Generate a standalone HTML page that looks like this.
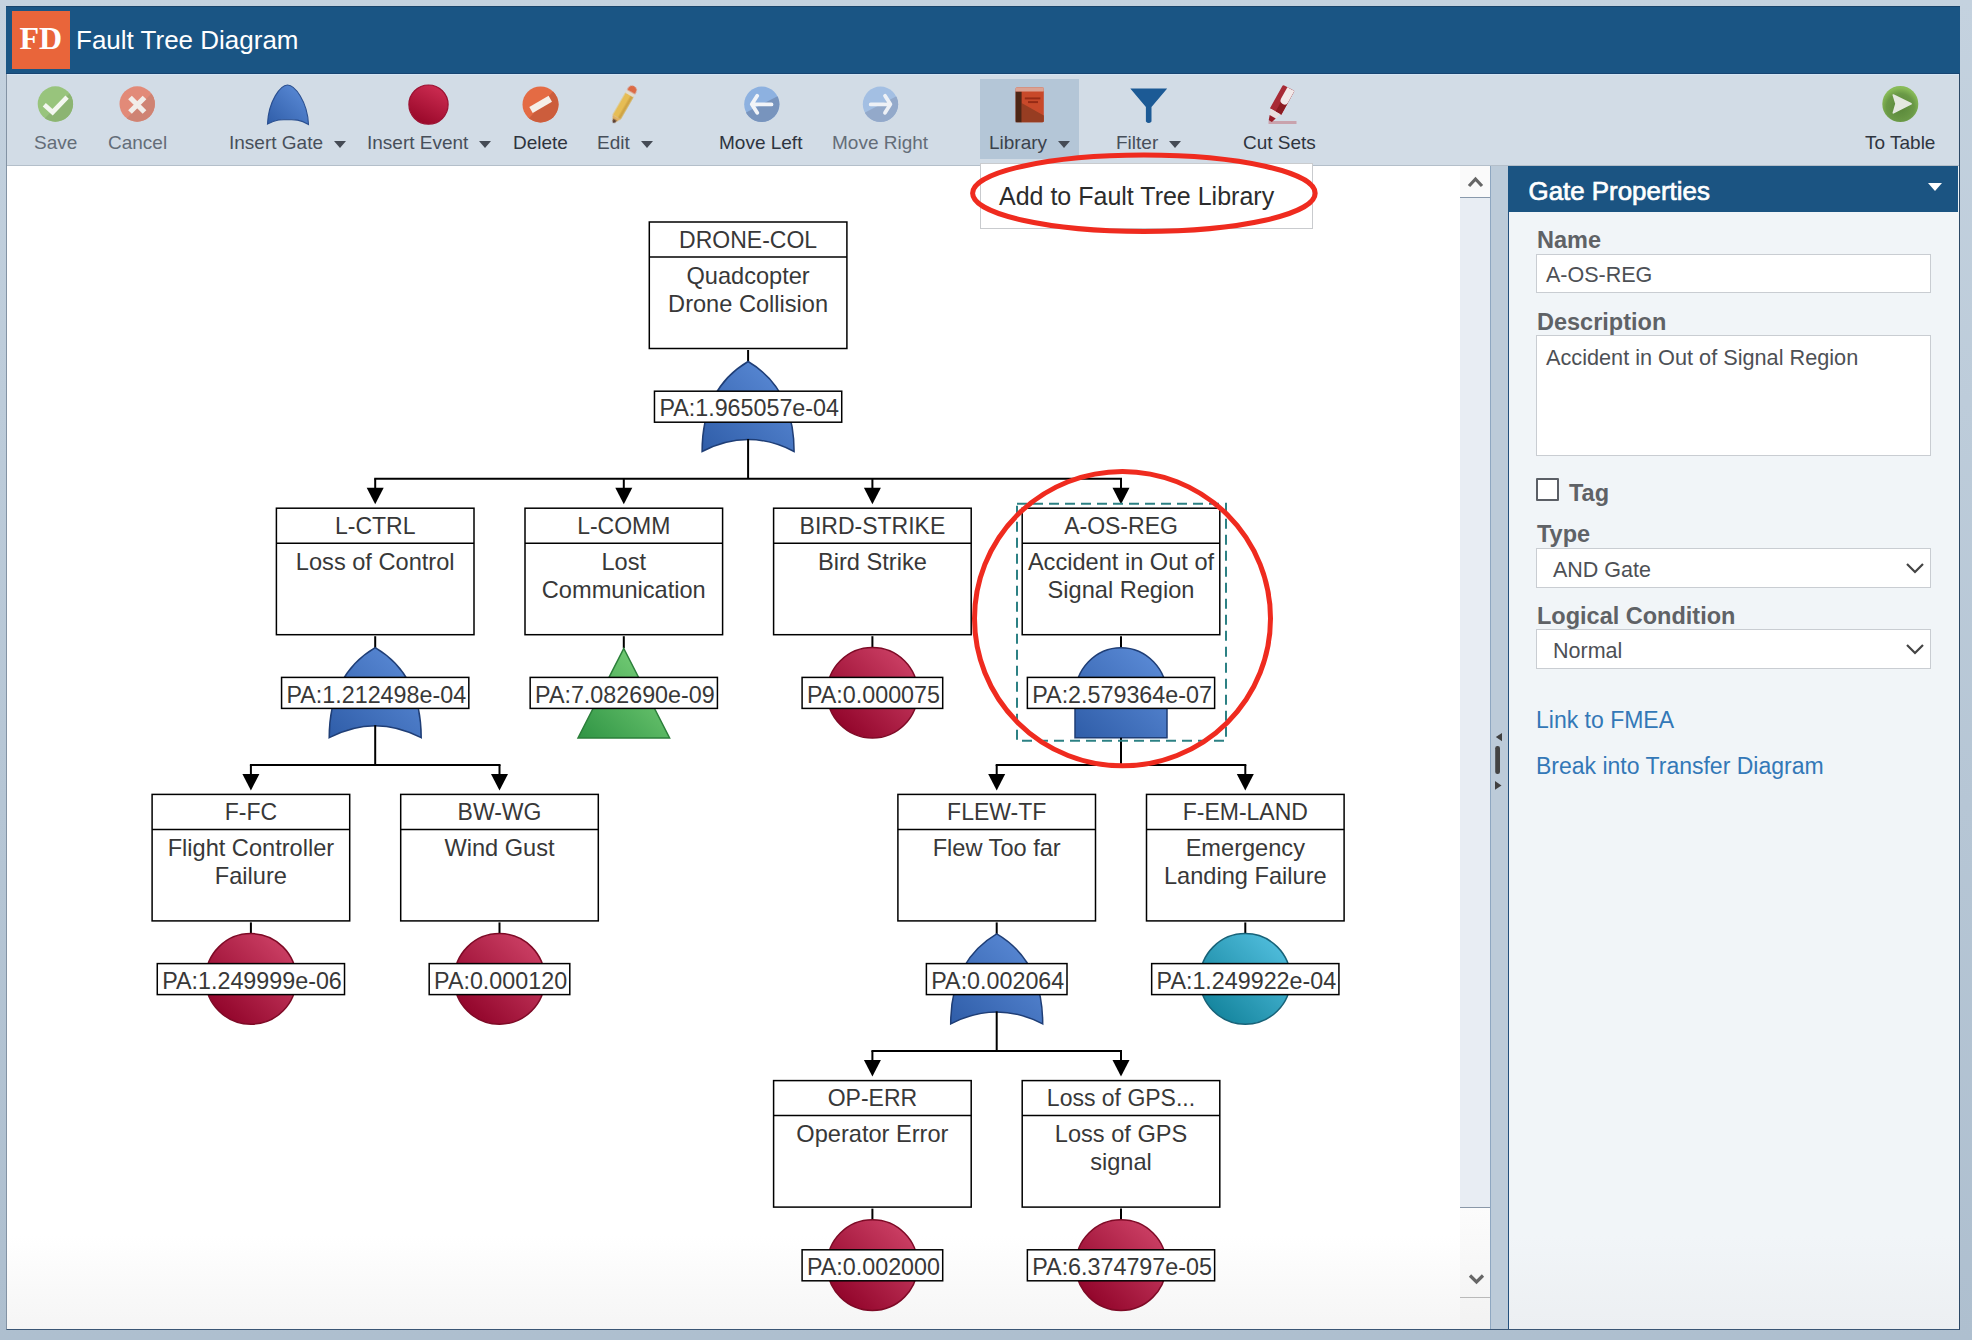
<!DOCTYPE html>
<html><head><meta charset="utf-8">
<style>
*{margin:0;padding:0;box-sizing:border-box}
html,body{width:1972px;height:1340px;overflow:hidden}
body{position:relative;background:linear-gradient(180deg,#c4d2df 0%,#b6c6d5 60%,#aebfcf 100%);font-family:"Liberation Sans",sans-serif}
.a{position:absolute}
.dt{font-family:"Liberation Sans",sans-serif;font-size:23px;fill:#383838}
.tb{position:absolute;top:132px;font-size:19px;line-height:22px;color:#2e343e;white-space:nowrap}
.dd{color:#474f5a}
.dis{color:#646d78}
.car{position:absolute;width:0;height:0;border-left:6px solid transparent;border-right:6px solid transparent;border-top:7px solid #454b55}
.lbl{position:absolute;left:1537px;font-weight:bold;font-size:23.5px;color:#5f6266;white-space:nowrap}
.inp{position:absolute;left:1536px;width:395px;background:#fff;border:1px solid #c9cdd2}
.itx{position:absolute;font-size:21.5px;color:#4d5055;white-space:nowrap}
.lnk{position:absolute;left:1536px;font-size:23px;color:#3378b7;white-space:nowrap}
</style></head>
<body>
<!-- frame borders -->
<div class="a" style="left:6px;top:6px;width:1954px;height:1324px;background:#fff;border-left:1px solid #8393a4;border-right:1px solid #2c4966;border-bottom:1px solid #3a5675"></div>

<!-- title bar -->
<div class="a" style="left:6px;top:6px;width:1954px;height:68px;background:#1a5584;border-top:1px solid #17446c;border-bottom:1px solid #174572"></div>
<div class="a" style="left:12px;top:11px;width:58px;height:58px;background:#e9653a"></div>
<div class="a" style="left:19.5px;top:20px;font-family:'Liberation Serif',serif;font-weight:bold;font-size:32px;line-height:36px;color:#fff;letter-spacing:0px">FD</div>
<div class="a" style="left:76px;top:24.5px;font-size:26px;line-height:30px;color:#fff;white-space:nowrap">Fault Tree Diagram</div>

<!-- toolbar -->
<div class="a" style="left:7px;top:74px;width:1952px;height:92px;background:#d2dce6;border-top:1px solid #d4e5f4;border-bottom:1px solid #b4bfca"></div>
<div class="a" style="left:980px;top:79px;width:99px;height:80px;background:#b4c6d7"></div>

<svg class="a" style="left:0;top:0" width="1972" height="170" viewBox="0 0 1972 170">
 <defs>
  <linearGradient id="tgred" x1="0.3" y1="0.9" x2="0.7" y2="0.1"><stop offset="0" stop-color="#9c0a2c"/><stop offset="1" stop-color="#c8294e"/></linearGradient>
  <linearGradient id="tgblue" x1="0" y1="1" x2="1" y2="0"><stop offset="0" stop-color="#2f5da8"/><stop offset="1" stop-color="#5f8fdb"/></linearGradient>
  <radialGradient id="tggreen" cx="0.5" cy="0.6" r="0.55"><stop offset="0" stop-color="#5a873a"/><stop offset="0.7" stop-color="#6a9946"/><stop offset="1" stop-color="#88bb58"/></radialGradient><filter id="blur1" x="-20%" y="-20%" width="140%" height="140%"><feGaussianBlur stdDeviation="0.7"/></filter>
  <clipPath id="cSave"><circle cx="55.4" cy="104" r="17.7"/></clipPath>
  <clipPath id="cCan"><circle cx="137.2" cy="104" r="17.7"/></clipPath>
  <clipPath id="cDel"><circle cx="540.5" cy="104.4" r="18"/></clipPath>
  <clipPath id="cML"><circle cx="761.6" cy="104.2" r="17.8"/></clipPath>
  <clipPath id="cMR"><circle cx="880.4" cy="104.2" r="17.8"/></clipPath>
 </defs>
 <!-- Save -->
 <circle cx="55.4" cy="104" r="17.7" fill="#98c47c"/>
 <path d="M44,119 L70,93 L80,103 L80,125 L55,125 Z" fill="#8cb472" clip-path="url(#cSave)"/>
 <path d="M46,106.3 L52.6,112.2 L65.5,98.8" fill="none" stroke="#f4f7f0" stroke-width="4.6" stroke-linecap="square"/>
 <!-- Cancel -->
 <circle cx="137.2" cy="104" r="17.7" fill="#e28a78"/>
 <path d="M126,119 L152,93 L162,103 L162,125 L137,125 Z" fill="#cf8373" clip-path="url(#cCan)"/>
 <path d="M130,97.5 L144.5,112 M144.5,97.5 L130,112" stroke="#f1ede9" stroke-width="5.2"/>
 <!-- Insert Gate -->
 <path d="M287.5,85 C280.5,85 268.5,101 267.5,124 C277,119 282,119.6 287.8,119.8 C294,119.6 299,119 308.5,124.5 C307.5,101 294.5,85 287.5,85 Z" fill="url(#tgblue)" stroke="#2a4f90" stroke-width="1.1"/>
 <!-- Insert Event -->
 <circle cx="428.5" cy="104.6" r="19.6" fill="url(#tgred)" stroke="#9c1232" stroke-width="1.2"/>
 <!-- Delete -->
 <circle cx="540.5" cy="104.4" r="18" fill="#e46b44"/>
 <path d="M524,124 L556,88 L566,100 L566,128 L540,128 Z" fill="#cc5d3c" clip-path="url(#cDel)"/>
 <path d="M531,110 L550.3,98.8" stroke="#f5efe9" stroke-width="6.8"/>
 <!-- Edit pencil -->
 <g transform="translate(623.3,105.4) rotate(30)" filter="url(#blur1)">
  <rect x="-4.5" y="-12.5" width="9" height="26" fill="#e6bd55"/>
  <rect x="1.5" y="-12.5" width="3" height="26" fill="#cfa445"/>
  <rect x="-4.5" y="-15.5" width="9" height="3.5" fill="#e4dccb"/>
  <path d="M-4.5,-15.5 L-4.5,-17.5 A4.5,4.5 0 0 1 4.5,-17.5 L4.5,-15.5 Z" fill="#dc6a45"/>
  <path d="M-4.5,13.5 L4.5,13.5 L1.5,19 Q0,20.5 -1.5,19 Z" fill="#e2b060"/>
  <path d="M-2.2,16.5 L2.2,16.5 L1.2,19.5 Q0,20.8 -1.2,19.5 Z" fill="#5a4038"/>
 </g>
 <!-- Move Left -->
 <g filter="url(#blur1)">
 <circle cx="761.8" cy="104.2" r="17.6" fill="#8db1e0"/>
 <path d="M778,96 L746,112.5 L746,126 L782,126 L782,96 Z" fill="#7894bd" clip-path="url(#cML)"/>
 <path d="M771.5,104.4 L753,104.4 M757.2,95.8 L751.8,104.3 L757.2,112.8" fill="none" stroke="#f2f4f8" stroke-width="3.8" stroke-linecap="round" stroke-linejoin="round"/>
 </g>
 <!-- Move Right -->
 <g filter="url(#blur1)">
 <circle cx="880.4" cy="104.2" r="17.6" fill="#a3bfe3"/>
 <path d="M897,96 L865,112.5 L865,126 L901,126 L901,96 Z" fill="#93a9ca" clip-path="url(#cMR)"/>
 <path d="M870.7,104.4 L889.2,104.4 M885,95.8 L890.4,104.3 L885,112.8" fill="none" stroke="#eef1f6" stroke-width="3.8" stroke-linecap="round" stroke-linejoin="round"/>
 </g>
 <!-- Library book -->
 <g filter="url(#blur1)">
 <rect x="1015.6" y="87.3" width="28.2" height="35" rx="1.5" fill="#c84a2a"/>
 <path d="M1021.5,103 L1043.8,115.5 L1043.8,121 Q1043.8,122.3 1042.3,122.3 L1021.5,122.3 Z" fill="#973d23"/>
 <rect x="1015.6" y="91.5" width="6" height="30.8" fill="#4d2519"/>
 <rect x="1015.6" y="87.3" width="28.2" height="4.3" rx="1.2" fill="#dba293"/>
 <rect x="1024.8" y="97.4" width="15.6" height="2" fill="#962c12"/>
 <rect x="1028" y="101.1" width="10" height="2" fill="#962c12"/>
 </g>
 <!-- Filter -->
 <path d="M1130.3,88.6 L1167.2,88.6 L1151.5,107 L1151.5,121.5 Q1148.7,124.5 1145.9,121.5 L1145.9,107 Z" fill="#1c5a95"/>
 <!-- Cut sets marker -->
 <g filter="url(#blur1)">
 <rect x="1268.5" y="121" width="28" height="3" fill="#c9a3ad"/>
 <g transform="translate(1279.5,104.5) rotate(29)">
  <path d="M-6.5,-17 Q-6.5,-19 -4.5,-19 L4.5,-19 Q6.5,-19 6.5,-17 L6.5,8 L-6.5,8 Z" fill="#a82a35"/>
  <rect x="0" y="-19" width="6.5" height="27" fill="#8c1a22"/>
  <path d="M-1.5,-19 L6.5,-19 L6.5,-6 Q6.5,-2 2.5,-2 Q-1.5,-2 -1.5,-6 Z" fill="#f1e9e9"/>
  <path d="M-5.5,8 L5.5,8 L3.5,14 L-3.5,14 Z" fill="#e9dede"/>
  <path d="M-3.5,14 L3.5,14 L1.8,19 L-1.8,19 Z" fill="#9a1c28"/>
 </g>
 </g>
 <!-- To Table -->
 <g filter="url(#blur1)"><circle cx="1900.3" cy="104" r="18" fill="url(#tggreen)"/>
 <path d="M1893.3,95 L1911.1,103.8 L1893.3,112.9 L1896,103.8 Z" fill="#e4e8e0" stroke="#e4e8e0" stroke-width="1.6" stroke-linejoin="round"/></g>
</svg>

<div class="tb dis" style="left:34px">Save</div>
<div class="tb dis" style="left:108px">Cancel</div>
<div class="tb dd" style="left:229px">Insert Gate</div><div class="car" style="left:334px;top:141px"></div>
<div class="tb dd" style="left:367px">Insert Event</div><div class="car" style="left:479px;top:141px"></div>
<div class="tb" style="left:513px">Delete</div>
<div class="tb dd" style="left:597px">Edit</div><div class="car" style="left:641px;top:141px"></div>
<div class="tb" style="left:719px">Move Left</div>
<div class="tb dis" style="left:832px">Move Right</div>
<div class="tb dd" style="left:989px;color:#3b424c">Library</div><div class="car" style="left:1058px;top:141px"></div>
<div class="tb dd" style="left:1116px">Filter</div><div class="car" style="left:1169px;top:141px"></div>
<div class="tb" style="left:1243px">Cut Sets</div>
<div class="tb" style="left:1865px">To Table</div>

<!-- canvas -->
<div class="a" style="left:7px;top:166px;width:1453px;height:1163px;background:linear-gradient(180deg,#fff 0%,#fff 92%,#f5f5f5 100%)"></div>
<svg class="a" style="left:0;top:0" width="1460" height="1329" viewBox="0 0 1460 1329">
<defs>
<linearGradient id="gblue" x1="0" y1="1" x2="1" y2="0"><stop offset="0" stop-color="#2f5da8"/><stop offset="1" stop-color="#5f8fdb"/></linearGradient>
<linearGradient id="gred" x1="0.15" y1="0.85" x2="0.85" y2="0.15"><stop offset="0" stop-color="#93062c"/><stop offset="1" stop-color="#c93d62"/></linearGradient>
<linearGradient id="gteal" x1="0.15" y1="0.85" x2="0.85" y2="0.15"><stop offset="0" stop-color="#16869f"/><stop offset="1" stop-color="#4dbad9"/></linearGradient>
<linearGradient id="ggreen" x1="0" y1="1" x2="1" y2="0"><stop offset="0" stop-color="#2f9444"/><stop offset="1" stop-color="#84d981"/></linearGradient>
</defs>
<line x1="748.10" y1="350.00" x2="748.10" y2="362.00" stroke="#000" stroke-width="2"/>
<path d="M748.10,361.50 C726.10,374.50 702.10,399.50 702.10,451.50 Q748.10,427.50 794.10,451.50 C794.10,399.50 770.10,374.50 748.10,361.50 Z" fill="url(#gblue)" stroke="#1f3e76" stroke-width="1.5"/>
<rect x="649.30" y="222.00" width="197.60" height="126.50" fill="#fff" stroke="#000" stroke-width="1.5"/>
<line x1="649.30" y1="257.00" x2="846.90" y2="257.00" stroke="#000" stroke-width="1.5"/>
<text x="748.10" y="247.80" text-anchor="middle" class="dt">DRONE-COL</text>
<text x="748.10" y="283.60" text-anchor="middle" class="dt" style="font-size:23.6px">Quadcopter</text>
<text x="748.10" y="311.80" text-anchor="middle" class="dt" style="font-size:23.6px">Drone Collision</text>
<line x1="375.20" y1="636.20" x2="375.20" y2="648.20" stroke="#000" stroke-width="2"/>
<path d="M375.20,647.70 C353.20,660.70 329.20,685.70 329.20,737.70 Q375.20,713.70 421.20,737.70 C421.20,685.70 397.20,660.70 375.20,647.70 Z" fill="url(#gblue)" stroke="#1f3e76" stroke-width="1.5"/>
<rect x="276.40" y="508.20" width="197.60" height="126.50" fill="#fff" stroke="#000" stroke-width="1.5"/>
<line x1="276.40" y1="543.20" x2="474.00" y2="543.20" stroke="#000" stroke-width="1.5"/>
<text x="375.20" y="534.00" text-anchor="middle" class="dt">L-CTRL</text>
<text x="375.20" y="569.80" text-anchor="middle" class="dt" style="font-size:23.6px">Loss of Control</text>
<line x1="623.80" y1="636.20" x2="623.80" y2="648.20" stroke="#000" stroke-width="2"/>
<path d="M623.80,648.50 L669.60,738.00 L578.00,738.00 Z" fill="url(#ggreen)" stroke="#2b7f3a" stroke-width="1.5"/>
<rect x="525.00" y="508.20" width="197.60" height="126.50" fill="#fff" stroke="#000" stroke-width="1.5"/>
<line x1="525.00" y1="543.20" x2="722.60" y2="543.20" stroke="#000" stroke-width="1.5"/>
<text x="623.80" y="534.00" text-anchor="middle" class="dt">L-COMM</text>
<text x="623.80" y="569.80" text-anchor="middle" class="dt" style="font-size:23.6px">Lost</text>
<text x="623.80" y="598.00" text-anchor="middle" class="dt" style="font-size:23.6px">Communication</text>
<line x1="872.40" y1="636.20" x2="872.40" y2="648.20" stroke="#000" stroke-width="2"/>
<circle cx="872.40" cy="692.70" r="45.3" fill="url(#gred)" stroke="#7e0a26" stroke-width="1.5"/>
<rect x="773.60" y="508.20" width="197.60" height="126.50" fill="#fff" stroke="#000" stroke-width="1.5"/>
<line x1="773.60" y1="543.20" x2="971.20" y2="543.20" stroke="#000" stroke-width="1.5"/>
<text x="872.40" y="534.00" text-anchor="middle" class="dt">BIRD-STRIKE</text>
<text x="872.40" y="569.80" text-anchor="middle" class="dt" style="font-size:23.6px">Bird Strike</text>
<line x1="1121.00" y1="636.20" x2="1121.00" y2="648.20" stroke="#000" stroke-width="2"/>
<path d="M1075.00,737.70 L1075.00,695.70 A46,48 0 0 1 1167.00,695.70 L1167.00,737.70 Z" fill="url(#gblue)" stroke="#1f3e76" stroke-width="1.5"/>
<rect x="1022.20" y="508.20" width="197.60" height="126.50" fill="#fff" stroke="#000" stroke-width="1.5"/>
<line x1="1022.20" y1="543.20" x2="1219.80" y2="543.20" stroke="#000" stroke-width="1.5"/>
<text x="1121.00" y="534.00" text-anchor="middle" class="dt">A-OS-REG</text>
<text x="1121.00" y="569.80" text-anchor="middle" class="dt" style="font-size:23.6px">Accident in Out of</text>
<text x="1121.00" y="598.00" text-anchor="middle" class="dt" style="font-size:23.6px">Signal Region</text>
<line x1="250.90" y1="922.40" x2="250.90" y2="934.40" stroke="#000" stroke-width="2"/>
<circle cx="250.90" cy="978.90" r="45.3" fill="url(#gred)" stroke="#7e0a26" stroke-width="1.5"/>
<rect x="152.10" y="794.40" width="197.60" height="126.50" fill="#fff" stroke="#000" stroke-width="1.5"/>
<line x1="152.10" y1="829.40" x2="349.70" y2="829.40" stroke="#000" stroke-width="1.5"/>
<text x="250.90" y="820.20" text-anchor="middle" class="dt">F-FC</text>
<text x="250.90" y="856.00" text-anchor="middle" class="dt" style="font-size:23.6px">Flight Controller</text>
<text x="250.90" y="884.20" text-anchor="middle" class="dt" style="font-size:23.6px">Failure</text>
<line x1="499.50" y1="922.40" x2="499.50" y2="934.40" stroke="#000" stroke-width="2"/>
<circle cx="499.50" cy="978.90" r="45.3" fill="url(#gred)" stroke="#7e0a26" stroke-width="1.5"/>
<rect x="400.70" y="794.40" width="197.60" height="126.50" fill="#fff" stroke="#000" stroke-width="1.5"/>
<line x1="400.70" y1="829.40" x2="598.30" y2="829.40" stroke="#000" stroke-width="1.5"/>
<text x="499.50" y="820.20" text-anchor="middle" class="dt">BW-WG</text>
<text x="499.50" y="856.00" text-anchor="middle" class="dt" style="font-size:23.6px">Wind Gust</text>
<line x1="996.70" y1="922.40" x2="996.70" y2="934.40" stroke="#000" stroke-width="2"/>
<path d="M996.70,933.90 C974.70,946.90 950.70,971.90 950.70,1023.90 Q996.70,999.90 1042.70,1023.90 C1042.70,971.90 1018.70,946.90 996.70,933.90 Z" fill="url(#gblue)" stroke="#1f3e76" stroke-width="1.5"/>
<rect x="897.90" y="794.40" width="197.60" height="126.50" fill="#fff" stroke="#000" stroke-width="1.5"/>
<line x1="897.90" y1="829.40" x2="1095.50" y2="829.40" stroke="#000" stroke-width="1.5"/>
<text x="996.70" y="820.20" text-anchor="middle" class="dt">FLEW-TF</text>
<text x="996.70" y="856.00" text-anchor="middle" class="dt" style="font-size:23.6px">Flew Too far</text>
<line x1="1245.30" y1="922.40" x2="1245.30" y2="934.40" stroke="#000" stroke-width="2"/>
<circle cx="1245.30" cy="978.90" r="45.3" fill="url(#gteal)" stroke="#176278" stroke-width="1.5"/>
<rect x="1146.50" y="794.40" width="197.60" height="126.50" fill="#fff" stroke="#000" stroke-width="1.5"/>
<line x1="1146.50" y1="829.40" x2="1344.10" y2="829.40" stroke="#000" stroke-width="1.5"/>
<text x="1245.30" y="820.20" text-anchor="middle" class="dt">F-EM-LAND</text>
<text x="1245.30" y="856.00" text-anchor="middle" class="dt" style="font-size:23.6px">Emergency</text>
<text x="1245.30" y="884.20" text-anchor="middle" class="dt" style="font-size:23.6px">Landing Failure</text>
<line x1="872.40" y1="1208.60" x2="872.40" y2="1220.60" stroke="#000" stroke-width="2"/>
<circle cx="872.40" cy="1265.10" r="45.3" fill="url(#gred)" stroke="#7e0a26" stroke-width="1.5"/>
<rect x="773.60" y="1080.60" width="197.60" height="126.50" fill="#fff" stroke="#000" stroke-width="1.5"/>
<line x1="773.60" y1="1115.60" x2="971.20" y2="1115.60" stroke="#000" stroke-width="1.5"/>
<text x="872.40" y="1106.40" text-anchor="middle" class="dt">OP-ERR</text>
<text x="872.40" y="1142.20" text-anchor="middle" class="dt" style="font-size:23.6px">Operator Error</text>
<line x1="1121.00" y1="1208.60" x2="1121.00" y2="1220.60" stroke="#000" stroke-width="2"/>
<circle cx="1121.00" cy="1265.10" r="45.3" fill="url(#gred)" stroke="#7e0a26" stroke-width="1.5"/>
<rect x="1022.20" y="1080.60" width="197.60" height="126.50" fill="#fff" stroke="#000" stroke-width="1.5"/>
<line x1="1022.20" y1="1115.60" x2="1219.80" y2="1115.60" stroke="#000" stroke-width="1.5"/>
<text x="1121.00" y="1106.40" text-anchor="middle" class="dt">Loss of GPS...</text>
<text x="1121.00" y="1142.20" text-anchor="middle" class="dt" style="font-size:23.6px">Loss of GPS</text>
<text x="1121.00" y="1170.40" text-anchor="middle" class="dt" style="font-size:23.6px">signal</text>
<line x1="748.10" y1="439.00" x2="748.10" y2="478.70" stroke="#000" stroke-width="2"/>
<line x1="375.20" y1="478.70" x2="1121.00" y2="478.70" stroke="#000" stroke-width="2" stroke-linecap="square"/>
<line x1="375.20" y1="478.70" x2="375.20" y2="489.20" stroke="#000" stroke-width="2"/>
<path d="M366.70,487.70 L383.70,487.70 L375.20,504.20 Z" fill="#000"/>
<line x1="623.80" y1="478.70" x2="623.80" y2="489.20" stroke="#000" stroke-width="2"/>
<path d="M615.30,487.70 L632.30,487.70 L623.80,504.20 Z" fill="#000"/>
<line x1="872.40" y1="478.70" x2="872.40" y2="489.20" stroke="#000" stroke-width="2"/>
<path d="M863.90,487.70 L880.90,487.70 L872.40,504.20 Z" fill="#000"/>
<line x1="1121.00" y1="478.70" x2="1121.00" y2="489.20" stroke="#000" stroke-width="2"/>
<path d="M1112.50,487.70 L1129.50,487.70 L1121.00,504.20 Z" fill="#000"/>
<line x1="375.20" y1="725.20" x2="375.20" y2="764.90" stroke="#000" stroke-width="2"/>
<line x1="250.90" y1="764.90" x2="499.50" y2="764.90" stroke="#000" stroke-width="2" stroke-linecap="square"/>
<line x1="250.90" y1="764.90" x2="250.90" y2="775.40" stroke="#000" stroke-width="2"/>
<path d="M242.40,773.90 L259.40,773.90 L250.90,790.40 Z" fill="#000"/>
<line x1="499.50" y1="764.90" x2="499.50" y2="775.40" stroke="#000" stroke-width="2"/>
<path d="M491.00,773.90 L508.00,773.90 L499.50,790.40 Z" fill="#000"/>
<line x1="1121.00" y1="737.70" x2="1121.00" y2="764.90" stroke="#000" stroke-width="2"/>
<line x1="996.70" y1="764.90" x2="1245.30" y2="764.90" stroke="#000" stroke-width="2" stroke-linecap="square"/>
<line x1="996.70" y1="764.90" x2="996.70" y2="775.40" stroke="#000" stroke-width="2"/>
<path d="M988.20,773.90 L1005.20,773.90 L996.70,790.40 Z" fill="#000"/>
<line x1="1245.30" y1="764.90" x2="1245.30" y2="775.40" stroke="#000" stroke-width="2"/>
<path d="M1236.80,773.90 L1253.80,773.90 L1245.30,790.40 Z" fill="#000"/>
<line x1="996.70" y1="1011.40" x2="996.70" y2="1051.10" stroke="#000" stroke-width="2"/>
<line x1="872.40" y1="1051.10" x2="1121.00" y2="1051.10" stroke="#000" stroke-width="2" stroke-linecap="square"/>
<line x1="872.40" y1="1051.10" x2="872.40" y2="1061.60" stroke="#000" stroke-width="2"/>
<path d="M863.90,1060.10 L880.90,1060.10 L872.40,1076.60 Z" fill="#000"/>
<line x1="1121.00" y1="1051.10" x2="1121.00" y2="1061.60" stroke="#000" stroke-width="2"/>
<path d="M1112.50,1060.10 L1129.50,1060.10 L1121.00,1076.60 Z" fill="#000"/>
<rect x="654.47" y="391.20" width="187.25" height="31.00" fill="#fff" stroke="#000" stroke-width="1.5"/>
<text x="749.20" y="416.30" text-anchor="middle" class="dt" style="font-size:23.3px">PA:1.965057e-04</text>
<rect x="281.57" y="677.40" width="187.25" height="31.00" fill="#fff" stroke="#000" stroke-width="1.5"/>
<text x="376.30" y="702.50" text-anchor="middle" class="dt" style="font-size:23.3px">PA:1.212498e-04</text>
<rect x="530.17" y="677.40" width="187.25" height="31.00" fill="#fff" stroke="#000" stroke-width="1.5"/>
<text x="624.90" y="702.50" text-anchor="middle" class="dt" style="font-size:23.3px">PA:7.082690e-09</text>
<rect x="802.09" y="677.40" width="140.61" height="31.00" fill="#fff" stroke="#000" stroke-width="1.5"/>
<text x="873.50" y="702.50" text-anchor="middle" class="dt" style="font-size:23.3px">PA:0.000075</text>
<rect x="1027.37" y="677.40" width="187.25" height="31.00" fill="#fff" stroke="#000" stroke-width="1.5"/>
<text x="1122.10" y="702.50" text-anchor="middle" class="dt" style="font-size:23.3px">PA:2.579364e-07</text>
<rect x="157.27" y="963.60" width="187.25" height="31.00" fill="#fff" stroke="#000" stroke-width="1.5"/>
<text x="252.00" y="988.70" text-anchor="middle" class="dt" style="font-size:23.3px">PA:1.249999e-06</text>
<rect x="429.19" y="963.60" width="140.61" height="31.00" fill="#fff" stroke="#000" stroke-width="1.5"/>
<text x="500.60" y="988.70" text-anchor="middle" class="dt" style="font-size:23.3px">PA:0.000120</text>
<rect x="926.39" y="963.60" width="140.61" height="31.00" fill="#fff" stroke="#000" stroke-width="1.5"/>
<text x="997.80" y="988.70" text-anchor="middle" class="dt" style="font-size:23.3px">PA:0.002064</text>
<rect x="1151.67" y="963.60" width="187.25" height="31.00" fill="#fff" stroke="#000" stroke-width="1.5"/>
<text x="1246.40" y="988.70" text-anchor="middle" class="dt" style="font-size:23.3px">PA:1.249922e-04</text>
<rect x="802.09" y="1249.80" width="140.61" height="31.00" fill="#fff" stroke="#000" stroke-width="1.5"/>
<text x="873.50" y="1274.90" text-anchor="middle" class="dt" style="font-size:23.3px">PA:0.002000</text>
<rect x="1027.37" y="1249.80" width="187.25" height="31.00" fill="#fff" stroke="#000" stroke-width="1.5"/>
<text x="1122.10" y="1274.90" text-anchor="middle" class="dt" style="font-size:23.3px">PA:6.374797e-05</text>
<rect x="1017" y="503.8" width="209" height="237" fill="none" stroke="#2c8184" stroke-width="2" stroke-dasharray="10 6"/>
<ellipse cx="1122.5" cy="618.6" rx="148" ry="147.2" fill="none" stroke="#ef2b1f" stroke-width="5"/>
</svg>

<!-- scrollbar -->
<div class="a" style="left:1460px;top:166px;width:30px;height:1163px;background:#e8edf3"></div>
<div class="a" style="left:1460px;top:166px;width:30px;height:32px;background:#fafafa;border-bottom:1px solid #8999ab"></div>
<div class="a" style="left:1460px;top:1207px;width:30px;height:122px;background:linear-gradient(180deg,#fcfcfc,#f2f2f2);border-top:1px solid #8a98a8"></div>
<div class="a" style="left:1460px;top:1297px;width:30px;height:1px;background:#b9b9b9"></div>
<svg class="a" style="left:1460px;top:166px" width="30" height="1163">
 <path d="M9,20 L15.5,13 L22,20" fill="none" stroke="#666" stroke-width="3.2"/>
 <path d="M10,1109.5 L16.5,1116 L23,1109.5" fill="none" stroke="#666" stroke-width="3.2"/>
</svg>

<!-- splitter -->
<div class="a" style="left:1490px;top:166px;width:18px;height:1163px;background:#bccbd9;border-left:1px solid #8ea7c1"></div>
<svg class="a" style="left:1490px;top:720px" width="18" height="80">
 <path d="M5.8,17.1 L12,12.9 L12,21.3 Z" fill="#404040"/>
 <rect x="5.2" y="26" width="4.8" height="28" rx="2.2" fill="#444"/>
 <path d="M5,61 L11.5,65.4 L5,69.8 Z" fill="#404040"/>
</svg>

<!-- properties panel -->
<div class="a" style="left:1508px;top:166px;width:451px;height:1163px;background:linear-gradient(180deg,#f1f5f8 0%,#f1f5f8 92%,#eceff2 100%);border-left:1px solid #23507d"></div>
<div class="a" style="left:1508px;top:166px;width:450px;height:46px;background:#1b5482"></div>
<div class="a" style="left:1528.5px;top:175.5px;font-weight:normal;font-size:25.9px;line-height:30px;color:#fff;-webkit-text-stroke:0.7px #fff;white-space:nowrap">Gate Properties</div>
<div class="a" style="left:1928px;top:183px;width:0;height:0;border-left:7.5px solid transparent;border-right:7.5px solid transparent;border-top:8.5px solid #fff"></div>

<div class="lbl" style="top:227px">Name</div>
<div class="inp" style="top:254px;height:39px"></div>
<div class="itx" style="left:1546px;top:262.5px">A-OS-REG</div>

<div class="lbl" style="top:308.5px">Description</div>
<div class="inp" style="top:335px;height:121px"></div>
<div class="itx" style="left:1546px;top:345px;font-size:21.7px">Accident in Out of Signal Region</div>

<div class="a" style="left:1536px;top:478px;width:23px;height:23px;background:#fff;border:2px solid #5b5f66;border-radius:1px"></div>
<div class="lbl" style="left:1569px;top:479.5px">Tag</div>

<div class="lbl" style="top:521px">Type</div>
<div class="inp" style="top:548px;height:40px"></div>
<div class="itx" style="left:1553px;top:557.5px">AND Gate</div>
<svg class="a" style="left:1900px;top:555px" width="30" height="25"><path d="M7,9 L15,17 L23,9" fill="none" stroke="#444" stroke-width="2.2"/></svg>

<div class="lbl" style="top:602.5px">Logical Condition</div>
<div class="inp" style="top:629px;height:40px"></div>
<div class="itx" style="left:1553px;top:638.5px">Normal</div>
<svg class="a" style="left:1900px;top:636px" width="30" height="25"><path d="M7,9 L15,17 L23,9" fill="none" stroke="#444" stroke-width="2.2"/></svg>

<div class="lnk" style="top:707px">Link to FMEA</div>
<div class="lnk" style="top:753px">Break into Transfer Diagram</div>

<!-- dropdown menu -->
<div class="a" style="left:980px;top:163px;width:333px;height:66px;background:#fff;border:1px solid #c9cbce"></div>
<div class="a" style="left:999px;top:181px;font-size:25px;line-height:30px;color:#2c2c2c;white-space:nowrap">Add to Fault Tree Library</div>
<svg class="a" style="left:0;top:0" width="1972" height="260">
 <ellipse cx="1143.9" cy="193.2" rx="171.3" ry="38.2" fill="none" stroke="#ef2b1f" stroke-width="5"/>
</svg>
</body></html>
